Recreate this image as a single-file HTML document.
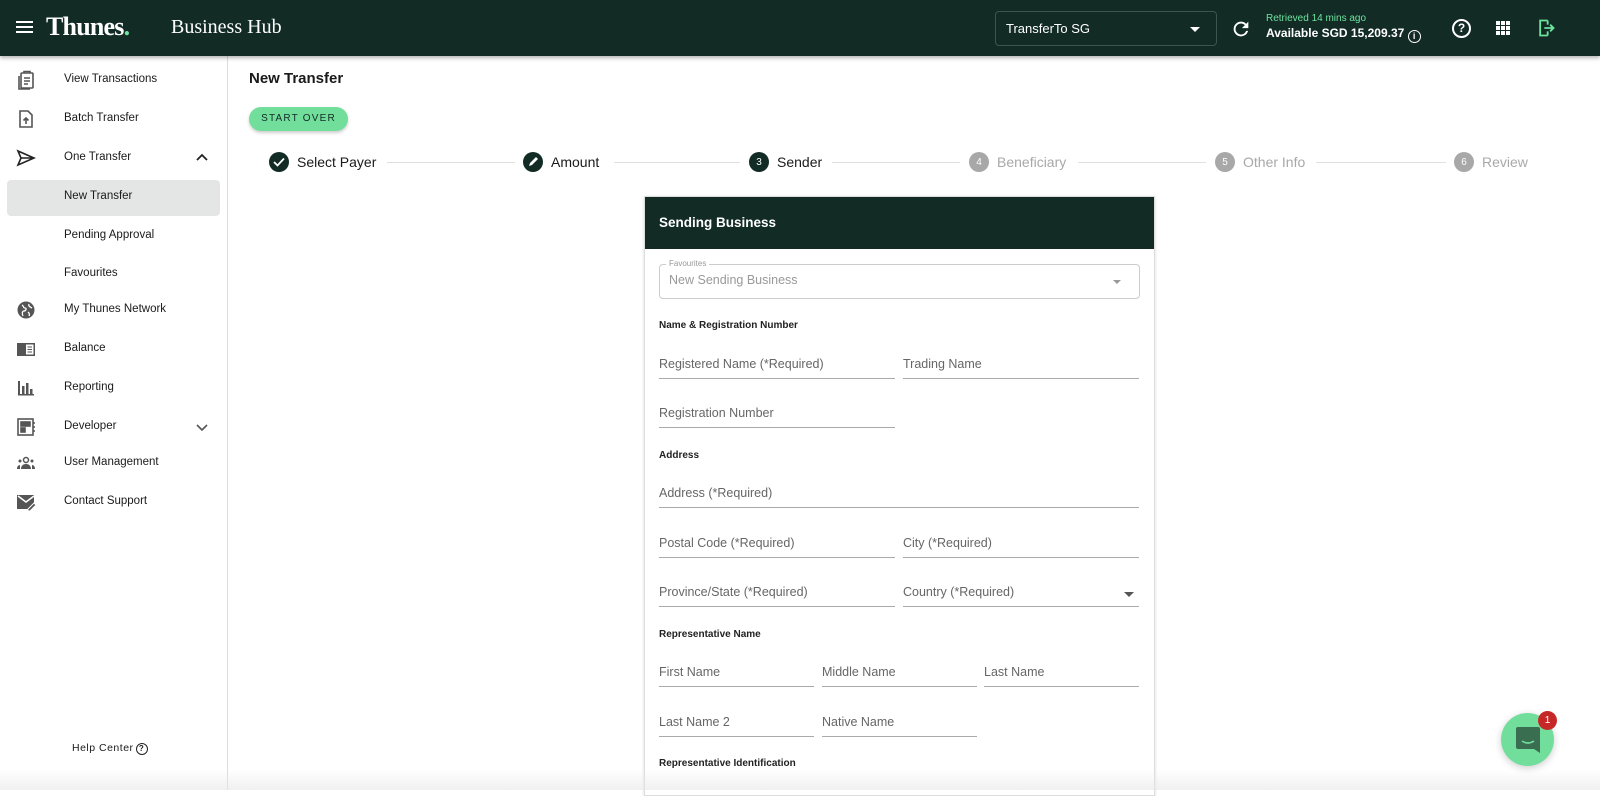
<!DOCTYPE html>
<html><head><meta charset="utf-8"><style>
*{box-sizing:border-box;margin:0;padding:0}
body{width:1600px;height:790px;overflow:hidden;font-family:"Liberation Sans",sans-serif;background:#fff;position:relative;color:#1a1a1a}
.top{position:absolute;left:0;top:0;width:1600px;height:56px;background:#122b24;box-shadow:0 2px 4px rgba(0,0,0,.3);z-index:2}
.side{position:absolute;left:0;top:56px;width:228px;height:734px;border-right:1px solid #ddd}
.nav{position:absolute;left:0;font-size:11.5px;color:#1a1a1a}
.nav span{position:absolute;left:64px;white-space:nowrap;top:-7px}
.ico{position:absolute;left:16px;top:-10px;width:20px;height:20px}
.f{position:absolute;font-size:12.5px;color:#666}
.u{position:absolute;height:1px;background:#aaa}
.sec{position:absolute;left:659px;font-size:10px;font-weight:bold;color:#222}
.step{position:absolute;top:152px;font-size:14px;display:flex;align-items:center;gap:8px}
.c{width:20px;height:20px;border-radius:50%;background:#122b24;color:#fff;font-size:10px;display:flex;align-items:center;justify-content:center}
.g .c{background:#a8a8a8}.g{color:#a8a8a8}
.ln{position:absolute;top:162px;height:1px;background:#e0e0e0}
</style></head><body>
<div class="top">
 <div style="position:absolute;left:16px;top:21px;width:17px;height:2px;background:#fff;box-shadow:0 5px 0 #fff,0 10px 0 #fff"></div>
 <div style="position:absolute;left:46px;top:12px;font-family:'Liberation Serif',serif;font-size:26px;font-weight:bold;color:#fff;letter-spacing:-0.8px">Thunes<span style="color:#6ee3a0">.</span></div>
 <div style="position:absolute;left:171px;top:16px;font-family:'Liberation Serif',serif;font-size:20px;color:#fff">Business Hub</div>
 <div style="position:absolute;left:995px;top:11px;width:222px;height:35px;border:1px solid #3c554d;border-radius:4px;color:#fff;font-size:13px;padding:9px 10px">TransferTo SG<span style="position:absolute;right:16px;top:15px;border:5px solid transparent;border-top-color:#fff;border-bottom:0"></span></div>
 <svg style="position:absolute;left:1230px;top:18px" width="22" height="22" viewBox="0 0 24 24"><path d="M17.65 6.35A7.96 7.96 0 0 0 12 4a8 8 0 1 0 7.730 10h-2.08A6 6 0 1 1 12 6c1.66 0 3.14.69 4.22 1.78L13 11h7V4z" fill="#fff"/></svg>
 <div style="position:absolute;left:1266px;top:13px;font-size:10px;color:#6ee3a0">Retrieved 14 mins ago</div>
 <div style="position:absolute;left:1266px;top:26px;font-size:12px;color:#fff;font-weight:bold">Available SGD 15,209.37 <span style="display:inline-block;width:13px;height:13px;border:1.5px solid #fff;border-radius:50%;font-size:9px;text-align:center;line-height:10px;vertical-align:-2px">i</span></div>
 <div style="position:absolute;left:1452px;top:19px;width:19px;height:19px;border:2px solid #fff;border-radius:50%;color:#fff;font-size:12px;font-weight:bold;text-align:center;line-height:15px">?</div>
 <svg style="position:absolute;left:1496px;top:21px" width="14" height="14" viewBox="0 0 14 14" fill="#fff"><rect x="0" y="0" width="4" height="4"/><rect x="5" y="0" width="4" height="4"/><rect x="10" y="0" width="4" height="4"/><rect x="0" y="5" width="4" height="4"/><rect x="5" y="5" width="4" height="4"/><rect x="10" y="5" width="4" height="4"/><rect x="0" y="10" width="4" height="4"/><rect x="5" y="10" width="4" height="4"/><rect x="10" y="10" width="4" height="4"/></svg>
 <svg style="position:absolute;left:1536px;top:18px" width="20" height="20" viewBox="0 0 24 24" fill="none" stroke="#6ee3a0" stroke-width="2.2"><path d="M14 3H5v18h9M14 8v-5M14 16v5"/><path d="M10 12h11M17 8l4 4-4 4"/></svg>
</div>
<div class="side">
 <div style="position:absolute;left:7px;top:124px;width:213px;height:36px;background:#e4e6e5;border-radius:4px"></div>
 <div class="nav" style="top:24px"><svg class="ico" viewBox="0 0 20 20" fill="none" stroke="#555" stroke-width="1.6"><rect x="5" y="3" width="12" height="15" rx="1"/><path d="M3 6v13h11M8 3V1.5h6V3M8 8h6M8 11h6M8 14h4"/></svg><span>View Transactions</span></div>
 <div class="nav" style="top:63px"><svg class="ico" viewBox="0 0 20 20" fill="none" stroke="#555" stroke-width="1.6"><path d="M4 2h8l4 4v12H4z"/><path d="M10 15V9M7.5 11.5 10 9l2.5 2.5"/></svg><span>Batch Transfer</span></div>
 <div class="nav" style="top:102px"><svg class="ico" viewBox="0 0 20 20" fill="none" stroke="#222" stroke-width="1.6"><path d="M2 3l16 7-16 7 3-7zM5 10h13"/></svg><span>One Transfer</span><svg style="position:absolute;left:196px;top:-5px" width="12" height="8" viewBox="0 0 12 8"><path d="M1 7l5-5 5 5" stroke="#222" stroke-width="1.8" fill="none"/></svg></div>
 <div class="nav" style="top:141px"><span>New Transfer</span></div>
 <div class="nav" style="top:180px"><span>Pending Approval</span></div>
 <div class="nav" style="top:218px"><span>Favourites</span></div>
 <div class="nav" style="top:254px"><svg class="ico" viewBox="0 0 20 20"><circle cx="10" cy="10" r="8.5" fill="#555"/><path d="M6 5c2 1 1 3 3 3s1 3-1 3-2 3-1 5M13 4c-1 2 1 3 3 4M12 12c1 1 2 2 1 4" stroke="#fff" stroke-width="1.3" fill="none"/></svg><span>My Thunes Network</span></div>
 <div class="nav" style="top:293px"><svg class="ico" viewBox="0 0 20 20"><rect x="1" y="4" width="18" height="13" fill="#555"/><rect x="10" y="5.5" width="7.5" height="10" fill="#fff"/><path d="M11.5 8h4.5M11.5 10.5h4.5M11.5 13h4.5" stroke="#555"/></svg><span>Balance</span></div>
 <div class="nav" style="top:332px"><svg class="ico" viewBox="0 0 20 20" fill="#555"><rect x="2" y="3" width="2" height="14"/><rect x="6" y="8" width="2.5" height="9"/><rect x="10" y="5" width="2.5" height="12"/><rect x="14" y="11" width="2.5" height="6"/><rect x="2" y="16" width="16" height="1.5"/></svg><span>Reporting</span></div>
 <div class="nav" style="top:371px"><svg class="ico" viewBox="0 0 20 20" fill="none" stroke="#555" stroke-width="1.6"><rect x="2" y="2" width="15" height="16"/><rect x="5" y="5" width="4" height="4" fill="#555"/><rect x="10" y="5" width="4" height="4" fill="#555"/><rect x="5" y="11" width="4" height="4" fill="#555"/><path d="M17 6h2M17 10h2M17 14h2"/></svg><span>Developer</span><svg style="position:absolute;left:196px;top:-3px" width="12" height="8" viewBox="0 0 12 8"><path d="M1 1l5 5 5-5" stroke="#555" stroke-width="1.6" fill="none"/></svg></div>
 <div class="nav" style="top:407px"><svg class="ico" viewBox="0 0 20 20" fill="#555"><circle cx="10" cy="7" r="2.5" fill="none" stroke="#555" stroke-width="1.5"/><circle cx="4" cy="8" r="1.5"/><circle cx="16" cy="8" r="1.5"/><path d="M5 16c0-3 2-5 5-5s5 2 5 5zM1 16c0-2 1-4 3-4v4zM19 16c0-2-1-4-3-4v4z"/></svg><span>User Management</span></div>
 <div class="nav" style="top:446px"><svg class="ico" viewBox="0 0 20 20" fill="#555"><path d="M1 3h17v8l-4 6H1z"/><path d="M2 4l8 6 8-6" stroke="#fff" stroke-width="1.5" fill="none"/><path d="M12 17l6-6 2 2-6 6h-2z" fill="#555" stroke="#fff"/></svg><span>Contact Support</span></div>
 <div style="position:absolute;left:72px;top:686px;font-size:10.5px;letter-spacing:.5px">Help Center<span style="display:inline-block;width:12px;height:12px;border:1.3px solid #222;border-radius:50%;font-size:8px;text-align:center;line-height:10px;margin-left:2px;font-weight:bold">?</span></div>
</div>
<div style="position:absolute;left:249px;top:70px;font-size:15px;font-weight:bold;color:#1a1a1a">New Transfer</div>
<div style="position:absolute;left:249px;top:107px;width:99px;height:24px;background:#72de9c;border-radius:12px;font-size:10px;letter-spacing:1.2px;text-align:center;line-height:24px;color:#122b24;box-shadow:0 2px 3px rgba(0,0,0,.2)">START OVER</div>
<div class="ln" style="left:387px;width:128px"></div>
<div class="ln" style="left:614px;width:126px"></div>
<div class="ln" style="left:832px;width:128px"></div>
<div class="ln" style="left:1078px;width:128px"></div>
<div class="ln" style="left:1316px;width:130px"></div>
<div class="step" style="left:269px"><div class="c"><svg width="12" height="10" viewBox="0 0 12 10"><path d="M1 5l3.5 3.5L11 1.5" stroke="#fff" stroke-width="1.8" fill="none"/></svg></div>Select Payer</div>
<div class="step" style="left:523px"><div class="c"><svg width="12" height="12" viewBox="0 0 12 12"><path d="M2 10l1-3 6-6 2 2-6 6z" fill="#fff"/></svg></div>Amount</div>
<div class="step" style="left:749px"><div class="c">3</div>Sender</div>
<div class="step g" style="left:969px"><div class="c">4</div>Beneficiary</div>
<div class="step g" style="left:1215px"><div class="c">5</div>Other Info</div>
<div class="step g" style="left:1454px"><div class="c">6</div>Review</div>
<div style="position:absolute;left:644px;top:196px;width:511px;height:600px;border:1px solid #ddd;box-shadow:0 1px 3px rgba(0,0,0,.15)">
 <div style="height:52px;background:#122b24;color:#fff;font-weight:bold;font-size:13.5px;padding:18px 14px">Sending Business</div>
</div>
<div style="position:absolute;left:659px;top:264px;width:481px;height:35px;border:1px solid #ccc;border-radius:4px"></div>
<div style="position:absolute;left:666px;top:259px;font-size:8px;color:#999;background:#fff;padding:0 3px">Favourites</div>
<div class="f" style="left:669px;top:273px;color:#999">New Sending Business</div>
<div style="position:absolute;left:1113px;top:280px;border:4px solid transparent;border-top-color:#999;border-bottom:0"></div>
<div class="sec" style="top:320px">Name &amp; Registration Number</div>
<div class="f" style="left:659px;top:357px">Registered Name (*Required)</div><div class="u" style="left:659px;top:378px;width:236px"></div>
<div class="f" style="left:903px;top:357px">Trading Name</div><div class="u" style="left:903px;top:378px;width:236px"></div>
<div class="f" style="left:659px;top:406px">Registration Number</div><div class="u" style="left:659px;top:427px;width:236px"></div>
<div class="sec" style="top:450px">Address</div>
<div class="f" style="left:659px;top:486px">Address (*Required)</div><div class="u" style="left:659px;top:507px;width:480px"></div>
<div class="f" style="left:659px;top:536px">Postal Code (*Required)</div><div class="u" style="left:659px;top:557px;width:236px"></div>
<div class="f" style="left:903px;top:536px">City (*Required)</div><div class="u" style="left:903px;top:557px;width:236px"></div>
<div class="f" style="left:659px;top:585px">Province/State (*Required)</div><div class="u" style="left:659px;top:606px;width:236px"></div>
<div class="f" style="left:903px;top:585px">Country (*Required)</div><div class="u" style="left:903px;top:606px;width:236px"></div>
<div style="position:absolute;left:1124px;top:592px;border:5px solid transparent;border-top-color:#555;border-bottom:0"></div>
<div class="sec" style="top:629px">Representative Name</div>
<div class="f" style="left:659px;top:665px">First Name</div><div class="u" style="left:659px;top:686px;width:155px"></div>
<div class="f" style="left:822px;top:665px">Middle Name</div><div class="u" style="left:822px;top:686px;width:155px"></div>
<div class="f" style="left:984px;top:665px">Last Name</div><div class="u" style="left:984px;top:686px;width:155px"></div>
<div class="f" style="left:659px;top:715px">Last Name 2</div><div class="u" style="left:659px;top:736px;width:155px"></div>
<div class="f" style="left:822px;top:715px">Native Name</div><div class="u" style="left:822px;top:736px;width:155px"></div>
<div class="sec" style="top:758px">Representative Identification</div>
<div style="position:absolute;left:0;top:770px;width:1600px;height:20px;background:linear-gradient(rgba(255,255,255,0),rgba(230,230,230,.6))"></div>
<div style="position:absolute;left:1501px;top:713px;width:53px;height:53px;border-radius:50%;background:#72de9c;box-shadow:0 2px 8px rgba(0,0,0,.2)">
 <svg style="position:absolute;left:15px;top:14px" width="24" height="26" viewBox="0 0 24 26"><path d="M2 0h20a2 2 0 0 1 2 2v24l-6-4H2a2 2 0 0 1-2-2V2a2 2 0 0 1 2-2z" fill="#3a6e50"/><path d="M6 14q6 4 12 0" stroke="#72de9c" stroke-width="1.6" fill="none"/></svg>
</div>
<div style="position:absolute;left:1538px;top:711px;width:19px;height:19px;border-radius:50%;background:#c62828;color:#fff;font-size:10px;text-align:center;line-height:19px">1</div>
</body></html>
